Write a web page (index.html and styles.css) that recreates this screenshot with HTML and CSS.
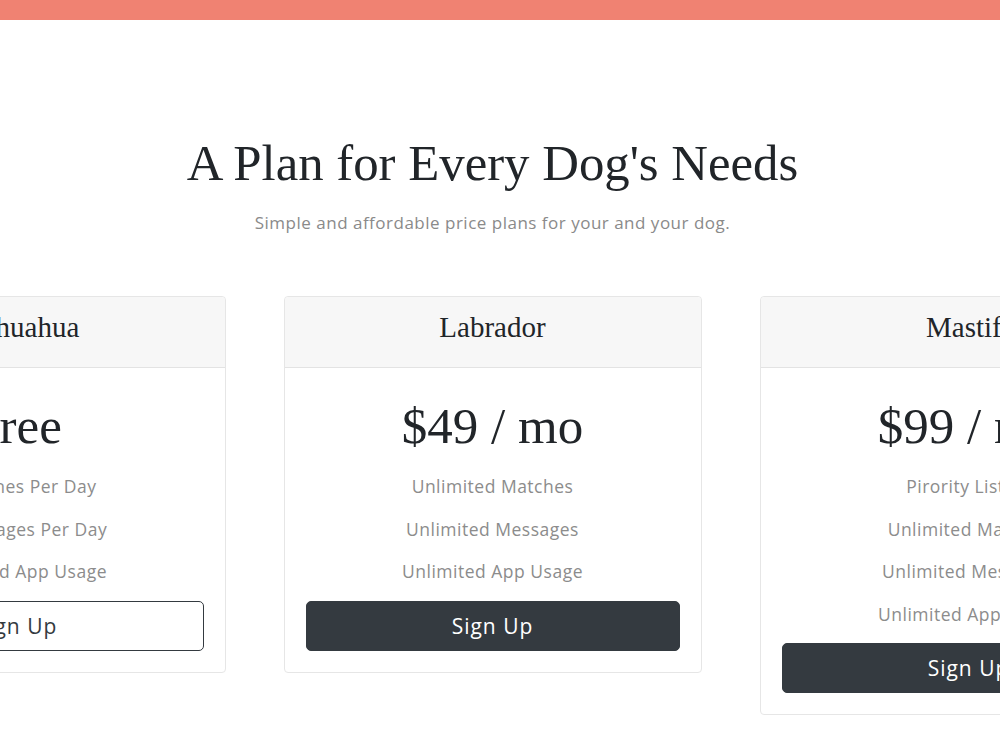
FILE: index.html
```html
<!DOCTYPE html>
<html lang="en">
<head>
<meta charset="utf-8">
<title>Pricing</title>
<link rel="stylesheet" href="styles.css">
</head>
<body>
<div class="topbar"></div>
<section class="pricing">
  <h1 class="title">A Plan for Every Dog's Needs</h1>
  <p class="subtitle">Simple and affordable price plans for your and your dog.</p>
  <div class="cards">
    <div class="card">
      <div class="card-header"><h3>Chihuahua</h3></div>
      <div class="card-body">
        <div class="price">Free</div>
        <ul class="features">
          <li>5 Matches Per Day</li>
          <li>10 Messages Per Day</li>
          <li>Unlimited App Usage</li>
        </ul>
        <button class="btn btn-outline">Sign Up</button>
      </div>
    </div>
    <div class="card">
      <div class="card-header"><h3>Labrador</h3></div>
      <div class="card-body">
        <div class="price">$49 / mo</div>
        <ul class="features">
          <li>Unlimited Matches</li>
          <li>Unlimited Messages</li>
          <li>Unlimited App Usage</li>
        </ul>
        <button class="btn btn-dark">Sign Up</button>
      </div>
    </div>
    <div class="card">
      <div class="card-header"><h3>Mastiff</h3></div>
      <div class="card-body">
        <div class="price">$99 / mo</div>
        <ul class="features">
          <li>Pirority Listing</li>
          <li>Unlimited Matches</li>
          <li>Unlimited Messages</li>
          <li>Unlimited App Usage</li>
        </ul>
        <button class="btn btn-dark">Sign Up</button>
      </div>
    </div>
  </div>
</section>
</body>
</html>
```

FILE: styles.css
```css
html, body {
  margin: 0;
  padding: 0;
  background: #ffffff;
  overflow: hidden;
}
body {
  font-family: "Open Sans", "Liberation Sans", sans-serif;
  color: #212529;
}
.topbar {
  height: 20px;
  background: #f08272;
}
.pricing {
  width: 985px;
  padding-top: 113px;
  text-align: center;
}
.title {
  margin: 0;
  font-family: "Liberation Serif", "Times New Roman", serif;
  font-weight: 400;
  font-size: 50.8px;
  line-height: 60px;
  color: #212529;
}
.subtitle {
  margin: 17px 0 0;
  font-size: 17px;
  line-height: 26px;
  color: #8a8a8a;
  letter-spacing: 0.5px;
}
.cards {
  margin-top: 60px;
  display: flex;
  justify-content: center;
  align-items: flex-start;
  gap: 58px;
}
.card {
  flex: 0 0 418px;
  width: 418px;
  border: 1px solid #e6e6e6;
  border-radius: 4px;
  box-sizing: border-box;
  background: #fff;
}
.card-header {
  background: #f7f7f7;
  border-bottom: 1px solid #e3e3e3;
  padding: 12px 0 22px;
  border-radius: 4px 4px 0 0;
}
.card-header h3 {
  margin: 0;
  font-family: "Liberation Serif", "Times New Roman", serif;
  font-weight: 400;
  font-size: 29px;
  line-height: 36px;
  color: #212529;
}
.card-body {
  padding: 28px 21px 21px;
}
.price {
  font-family: "Liberation Serif", "Times New Roman", serif;
  font-size: 51px;
  line-height: 60px;
  color: #212529;
}
.features {
  list-style: none;
  margin: 9px 0 8px;
  padding: 0;
}
.features li {
  font-size: 17.5px;
  line-height: 42.5px;
  color: #8c8c8c;
  letter-spacing: 0.5px;
}
.btn {
  display: block;
  width: 100%;
  height: 50px;
  border-radius: 5px;
  font-family: "Open Sans", "Liberation Sans", sans-serif;
  font-size: 21px;
  letter-spacing: 1px;
  cursor: pointer;
}
.btn-dark {
  background: #343a40;
  border: 1px solid #343a40;
  color: #ffffff;
}
.btn-outline {
  background: #ffffff;
  border: 1px solid #343a40;
  color: #343a40;
}
```
